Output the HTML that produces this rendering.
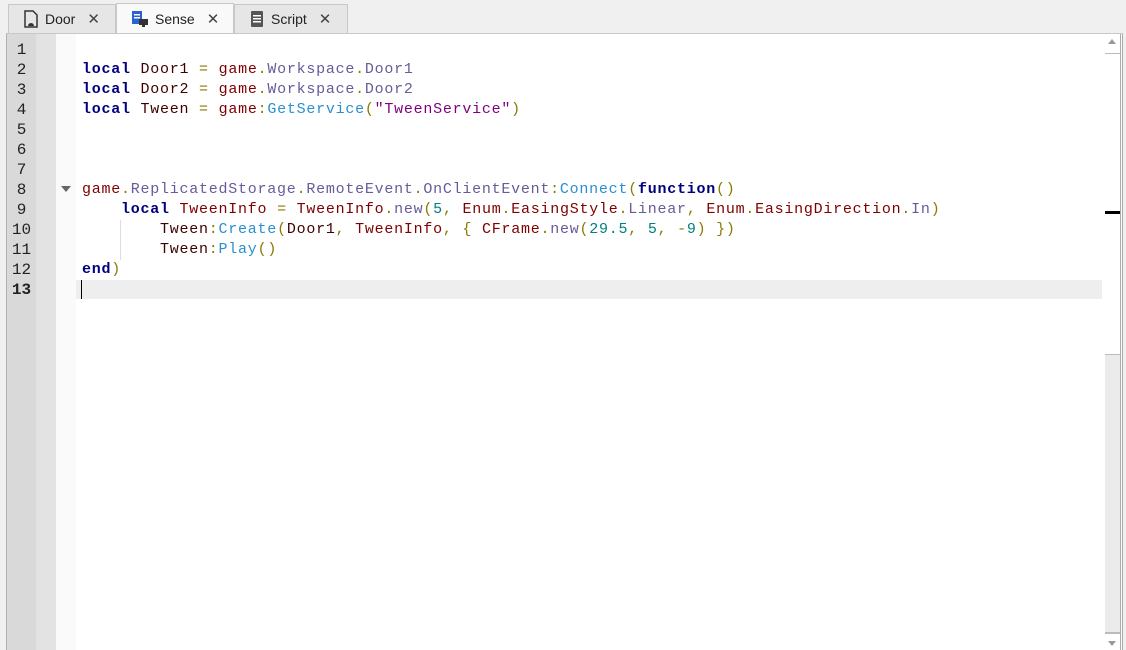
<!DOCTYPE html>
<html><head><meta charset="utf-8"><style>
*{margin:0;padding:0;box-sizing:border-box}
body{width:1126px;height:650px;background:#f0f0f0;position:relative;overflow:hidden;font-family:"Liberation Sans",sans-serif}
.tab{position:absolute;top:4px;height:29px;border:1px solid #c8c8c8;border-bottom:none;background:#e6e6e6;font-size:14px;color:#222;display:flex;align-items:center}
.tab.act{background:#f9f9f9;top:3px;height:31px}
.tab svg{margin-left:14px;margin-right:6px}
.x{margin-left:12px;font-size:15px;color:#444}
.ed{position:absolute;left:6px;top:33px;width:1117px;height:617px;background:#fff;border-left:1px solid #b0b0b0;border-top:1px solid #c8c8c8}
.g1{position:absolute;left:7px;top:34px;width:29px;height:616px;background:#d9d9d9}
.g2{position:absolute;left:36px;top:34px;width:20px;height:616px;background:#e3e3e3}
.g3{position:absolute;left:56px;top:34px;width:20px;height:616px;background:#fafafa}
.cur{position:absolute;left:76px;top:280px;width:1026px;height:19px;background:#eeeeee}
.ln{position:absolute;left:7px;width:29px;text-align:center;font-family:"Liberation Mono",monospace;font-size:16px;color:#222}
.code{position:absolute;left:82px;top:40px;font-family:"Liberation Mono",monospace;font-size:15px;letter-spacing:0.75px;line-height:20px;white-space:pre;color:#400000}
.k{color:#00007f;font-weight:bold}.r{color:#7f0000}.p{color:#6a5a9a}.m{color:#2a8fd0}.o{color:#8a7a00}.n{color:#008080}.s{color:#7f007f}.v{color:#5a2000}
</style></head><body>
<div class="tab" style="left:8px;width:108px"><svg width="16" height="18" viewBox="0 0 16 18"><path d="M2 1h8l4 4v12H2z" fill="none" stroke="#333" stroke-width="1.5"/><path d="M5 16a3 3 0 0 1 6 0z" fill="#333"/></svg>Door<span class="x">✕</span></div>
<div class="tab act" style="left:116px;width:118px"><svg width="18" height="18" viewBox="0 0 18 18"><rect x="1" y="1" width="10" height="13" fill="#2a62d0"/><rect x="3" y="4" width="6" height="1.5" fill="#fff"/><rect x="3" y="7" width="6" height="1.5" fill="#fff"/><rect x="8" y="9" width="9" height="6" fill="#333"/><rect x="11" y="15" width="3" height="2" fill="#333"/></svg>Sense<span class="x">✕</span></div>
<div class="tab" style="left:234px;width:114px"><svg width="16" height="18" viewBox="0 0 16 18"><rect x="2" y="1" width="12" height="16" rx="1" fill="#555"/><rect x="4" y="5" width="8" height="1.5" fill="#fff"/><rect x="4" y="8" width="8" height="1.5" fill="#fff"/><rect x="4" y="11" width="8" height="1.5" fill="#fff"/></svg>Script<span class="x">✕</span></div>
<div class="ed"></div>
<div class="g1"></div><div class="g2"></div><div class="g3"></div>
<div class="cur"></div>
<div style="position:absolute;left:81px;top:280px;width:1px;height:19px;background:#000"></div>
<div style="position:absolute;left:120px;top:220px;width:1px;height:40px;background:#ddd"></div>
<div style="position:absolute;left:61px;top:186px;width:0;height:0;border-left:5px solid transparent;border-right:5px solid transparent;border-top:6px solid #666"></div>
<div class="ln" style="top:41px">1</div><div class="ln" style="top:61px">2</div><div class="ln" style="top:81px">3</div><div class="ln" style="top:101px">4</div><div class="ln" style="top:121px">5</div><div class="ln" style="top:141px">6</div><div class="ln" style="top:161px">7</div><div class="ln" style="top:181px">8</div><div class="ln" style="top:201px">9</div><div class="ln" style="top:221px">10</div><div class="ln" style="top:241px">11</div><div class="ln" style="top:261px">12</div><div class="ln" style="top:281px;font-weight:bold">13</div>
<div class="code">
<span class="k">local</span> Door1 <span class="o">=</span> <span class="r">game</span><span class="o">.</span><span class="p">Workspace</span><span class="o">.</span><span class="p">Door1</span>
<span class="k">local</span> Door2 <span class="o">=</span> <span class="r">game</span><span class="o">.</span><span class="p">Workspace</span><span class="o">.</span><span class="p">Door2</span>
<span class="k">local</span> Tween <span class="o">=</span> <span class="r">game</span><span class="o">:</span><span class="m">GetService</span><span class="o">(</span><span class="s">"TweenService"</span><span class="o">)</span>



<span class="r">game</span><span class="o">.</span><span class="p">ReplicatedStorage</span><span class="o">.</span><span class="p">RemoteEvent</span><span class="o">.</span><span class="p">OnClientEvent</span><span class="o">:</span><span class="m">Connect</span><span class="o">(</span><span class="k">function</span><span class="o">()</span>
    <span class="k">local</span> <span class="r">TweenInfo</span> <span class="o">=</span> <span class="r">TweenInfo</span><span class="o">.</span><span class="p">new</span><span class="o">(</span><span class="n">5</span><span class="o">,</span> <span class="r">Enum</span><span class="o">.</span><span class="r">EasingStyle</span><span class="o">.</span><span class="p">Linear</span><span class="o">,</span> <span class="r">Enum</span><span class="o">.</span><span class="r">EasingDirection</span><span class="o">.</span><span class="p">In</span><span class="o">)</span>
        Tween<span class="o">:</span><span class="m">Create</span><span class="o">(</span>Door1<span class="o">,</span> <span class="r">TweenInfo</span><span class="o">,</span> <span class="o">{</span> <span class="r">CFrame</span><span class="o">.</span><span class="p">new</span><span class="o">(</span><span class="n">29.5</span><span class="o">,</span> <span class="n">5</span><span class="o">,</span> <span class="o">-</span><span class="n">9</span><span class="o">) })</span>
        Tween<span class="o">:</span><span class="m">Play</span><span class="o">()</span>
<span class="k">end</span><span class="o">)</span>
</div>
<div style="position:absolute;left:1105px;top:34px;width:15px;height:616px;background:#fff"></div>
<div style="position:absolute;left:1105px;top:53px;width:15px;height:1px;background:#bbb"></div>
<div style="position:absolute;left:1108px;top:39px;border-left:4px solid transparent;border-right:4px solid transparent;border-bottom:5px solid #999"></div>
<div style="position:absolute;left:1105px;top:354px;width:15px;height:280px;background:#ebebeb;border-top:1px solid #bbb;border-bottom:2px solid #bbb"></div>
<div style="position:absolute;left:1108px;top:641px;border-left:4px solid transparent;border-right:4px solid transparent;border-top:5px solid #999"></div>
<div style="position:absolute;left:1105px;top:211px;width:16px;height:3px;background:#000"></div>
<div style="position:absolute;left:1120px;top:34px;width:1px;height:616px;background:#aaa"></div>
<div style="position:absolute;left:1122px;top:34px;width:1px;height:616px;background:#aaa"></div>
</body></html>
